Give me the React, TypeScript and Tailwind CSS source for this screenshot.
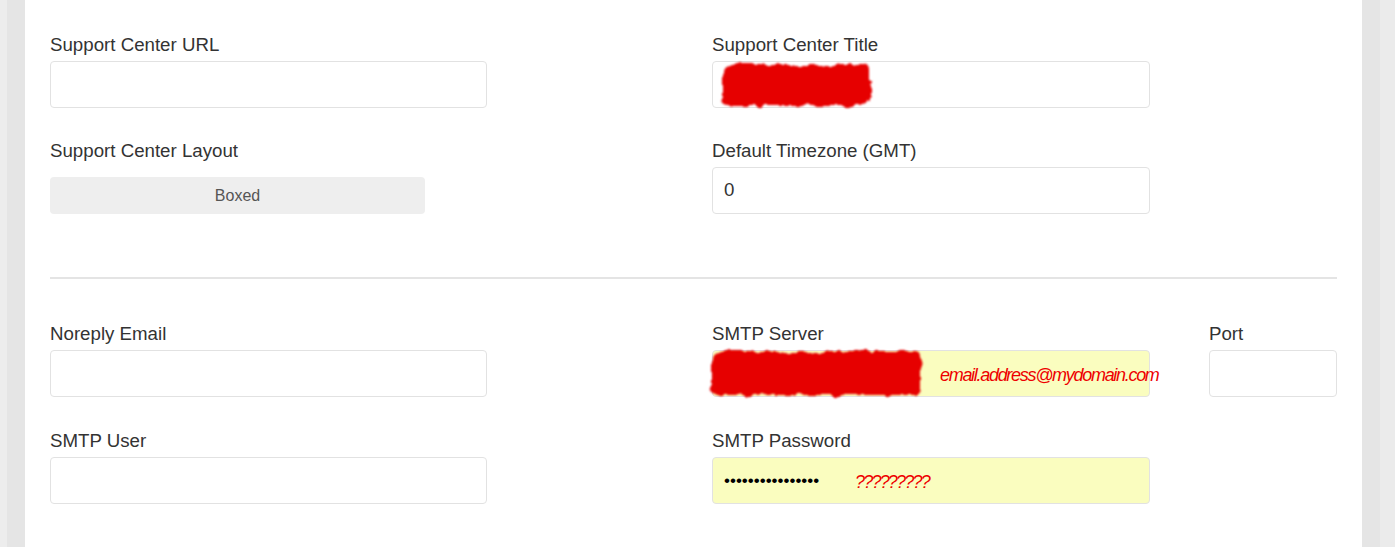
import React from "react";

const font = { fontFamily: '"Liberation Sans", Arial, sans-serif' };

function Scribble({ w, h, id }: { w: number; h: number; id: string }) {
  return (
    <svg width={w} height={h} viewBox={`0 0 ${w} ${h}`} className="absolute pointer-events-none">
      <defs>
        <filter id={id} x="-10%" y="-10%" width="120%" height="120%">
          <feTurbulence type="fractalNoise" baseFrequency="0.08" numOctaves="3" seed="4" />
          <feDisplacementMap in="SourceGraphic" scale="9" />
          <feGaussianBlur stdDeviation="0.8" />
        </filter>
      </defs>
      <rect x="5" y="5" width={w - 10} height={h - 10} rx="6" fill="#e60000" filter={`url(#${id})`} />
    </svg>
  );
}

function Label({ children }: { children: React.ReactNode }) {
  return (
    <div className="h-[28px] pt-[2px] flex items-center text-[18.7px] text-[#333333] leading-none">{children}</div>
  );
}

function Input({ className = "", children }: { className?: string; children?: React.ReactNode }) {
  return (
    <div
      className={`relative mt-[3px] h-[47px] border border-[#e2e2e2] rounded-[4px] flex items-center px-[11px] text-[18.7px] text-[#333333] ${className}`}
    >
      {children}
    </div>
  );
}

export default function App() {
  return (
    <div className="w-[1395px] h-[547px] flex bg-[#e5e5e5] overflow-hidden" style={font}>
      <div className="w-[7px] bg-[#ededed]" />
      <div className="w-[18px]" />
      <div className="w-[1337px] bg-white pl-[25px] pr-[25px] pt-[30px]">
        {/* Row A / B */}
        <div className="flex">
          <div className="w-[662px]">
            <Label>Support Center URL</Label>
            <Input className="w-[437px] bg-white" />
            <div className="mt-[28px]">
              <Label>Support Center Layout</Label>
              <div className="mt-[13px] w-[375px] h-[37px] rounded-[4px] bg-[#eeeeee] flex items-center justify-center text-[16px] text-[#555555]">
                Boxed
              </div>
            </div>
          </div>
          <div className="flex-1">
            <Label>Support Center Title</Label>
            <Input className="w-[438px] bg-white">
              <div className="absolute left-[4px] top-[-3px]">
                <Scribble w={158} h={52} id="s1" />
              </div>
            </Input>
            <div className="mt-[28px]">
              <Label>Default Timezone (GMT)</Label>
              <Input className="w-[438px] bg-white">0</Input>
            </div>
          </div>
        </div>

        <div className="mt-[63px] h-[2px] bg-[#e4e4e4]" />

        {/* Row C / D */}
        <div className="flex mt-[40px]">
          <div className="w-[662px]">
            <Label>Noreply Email</Label>
            <Input className="w-[437px] bg-white" />
            <div className="mt-[29px]">
              <Label>SMTP User</Label>
              <Input className="w-[437px] bg-white" />
            </div>
          </div>
          <div className="flex-1">
            <div className="flex gap-[59px]">
              <div className="w-[438px]">
                <Label>SMTP Server</Label>
                <Input className="w-[438px] bg-[#fafdbf]">
                  <span className="absolute left-[190px] top-[12px] text-[16px] text-black">n</span>
                  <div className="absolute left-[-7px] top-[-5px]">
                    <Scribble w={220} h={54} id="s2" />
                  </div>
                  <span className="absolute left-[227px] top-[11px] whitespace-nowrap italic text-[18px] tracking-[-1.3px] text-[#ee0000]">
                    email.address@mydomain.com
                  </span>
                </Input>
              </div>
              <div className="w-[128px]">
                <Label>Port</Label>
                <Input className="w-[128px] bg-white" />
              </div>
            </div>
            <div className="mt-[29px]">
              <Label>SMTP Password</Label>
              <Input className="w-[438px] bg-[#fafdbf]">
                <span className="text-[17px] text-black leading-none">
                  ••••••••••••••••
                </span>
                <span className="absolute left-[142px] top-[11px] whitespace-nowrap italic text-[18px] tracking-[-1.8px] text-[#ee0000]">
                  ?????????
                </span>
              </Input>
            </div>
          </div>
        </div>
      </div>
      <div className="w-[18px]" />
      <div className="flex-1 bg-[#ebebeb]" />
    </div>
  );
}
